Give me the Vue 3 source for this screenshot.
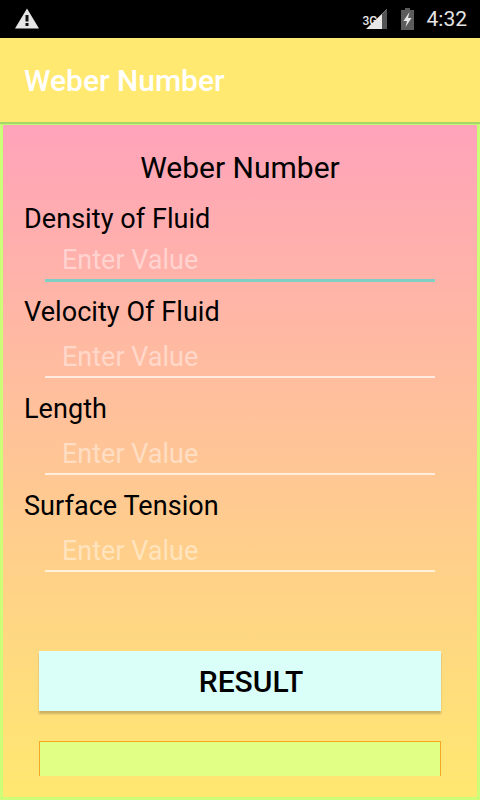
<template>
  <div class="screen">
    <div class="status-bar">
      <svg class="warn" width="24" height="21" viewBox="0 0 24 21">
        <path d="M12 0.5 L24 20.5 H0 Z" fill="#e6e6e6" />
        <rect x="10.5" y="7" width="3" height="6.5" fill="#111" />
        <rect x="10.5" y="15" width="3" height="3" fill="#111" />
      </svg>
      <div class="status-right">
        <span class="net">3G</span>
        <svg class="signal" width="21" height="20" viewBox="0 0 21 20">
          <path d="M21 0 V20 H0 Z" fill="#e8e8e8" />
          <path d="M21 0 V20 H16 V5 Z" fill="#555" />
        </svg>
        <svg class="battery" width="13" height="22" viewBox="0 0 13 22">
          <path d="M4 0 H9 V2 H13 V22 H0 V2 H4 Z" fill="#5c5c5c" />
          <path d="M8.5 4 L2.5 13 H6 L4.5 19 L10.5 10 H7 Z" fill="#e8e8e8" />
        </svg>
        <span class="clock">4:32</span>
      </div>
    </div>

    <header class="app-bar">Weber Number</header>

    <main class="content">
      <h1 class="title">Weber Number</h1>

      <div v-for="(field, index) in fields" :key="field" class="field" :class="{ first: index === 0 }">
        <label class="label">{{ field }}</label>
        <input class="value" type="text" placeholder="Enter Value" />
      </div>

      <button class="result-btn">RESULT</button>
      <div class="result-box"></div>
    </main>
  </div>
</template>

<script setup>
const fields = ["Density of Fluid", "Velocity Of Fluid", "Length", "Surface Tension"];
</script>

<style>
html,
body {
  margin: 0;
  background: #ccff77;
}
</style>

<style scoped>
.screen {
  width: 480px;
  height: 800px;
  display: flex;
  flex-direction: column;
  overflow: hidden;
  font-family: Roboto, "Liberation Sans", sans-serif;
  background: #ccff77;
}

.status-bar {
  height: 38px;
  flex: none;
  background: #000;
  display: flex;
  align-items: center;
  justify-content: space-between;
  padding: 0 13px 0 15px;
  box-sizing: border-box;
}

.warn {
  margin-top: -1px;
}

.status-right {
  display: flex;
  align-items: center;
}

.net {
  color: #e8e8e8;
  font-size: 12px;
  font-weight: 500;
  align-self: flex-start;
  margin: 7px -12px 0 0;
  position: relative;
}

.signal {
  margin-top: 0;
}

.battery {
  margin: 0 13px 0 14px;
}

.clock {
  color: #e4e4e4;
  font-size: 21px;
}

.app-bar {
  height: 84px;
  flex: none;
  background: #ffe970;
  color: #fff;
  font-size: 30px;
  font-weight: 500;
  line-height: 86px;
  padding-left: 24px;
  box-shadow: 0 2px 1px #a5d86a;
  position: relative;
}

.content {
  flex: 1;
  margin: 3px;
  padding-top: 25px;
  background: linear-gradient(#ffa3ba, #ffe870);
  display: flex;
  flex-direction: column;
  overflow: hidden;
}

.title {
  margin: 0 0 17px;
  font-size: 30px;
  font-weight: 400;
  line-height: 36px;
  text-align: center;
  color: #000;
}

.field {
  display: flex;
  flex-direction: column;
  height: 97px;
}

.field.first {
  height: 93px;
}

.label {
  font-size: 27px;
  line-height: 32px;
  padding-left: 21px;
  letter-spacing: 0.06px;
  color: #000;
}

.value {
  width: 390px;
  margin: 10px 0 0 42px;
  height: 40px;
  padding: 0 0 0 17px;
  box-sizing: border-box;
  border: 0;
  border-bottom: 2px solid rgba(255, 255, 255, 0.7);
  background: transparent;
  font: inherit;
  font-size: 27px;
  outline: none;
}

.value::placeholder {
  color: rgba(255, 255, 255, 0.45);
}

.first .value {
  margin-top: 5px;
  height: 42px;
  border-bottom: 3px solid #7fcfc4;
}

.result-btn {
  flex: none;
  width: 402px;
  height: 60px;
  margin: 64px 0 0 36px;
  padding: 0 0 0 22px;
  border: 0;
  background: #d9fff8;
  box-shadow: 0 3px 2px rgba(0, 0, 0, 0.2);
  font: inherit;
  font-size: 30px;
  font-weight: 500;
  color: #000;
}

.result-box {
  flex: none;
  width: 402px;
  height: 35px;
  margin: 30px 0 0 36px;
  box-sizing: border-box;
  border: 1px solid #f5a623;
  border-bottom: 0;
  background: #e2ff85;
}
</style>
